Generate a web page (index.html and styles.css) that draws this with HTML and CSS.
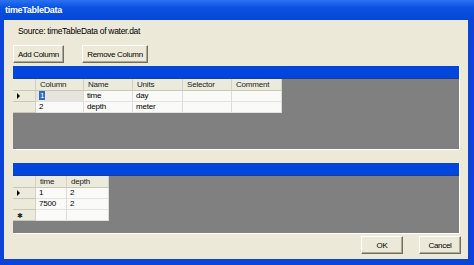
FILE: index.html
```html
<!DOCTYPE html>
<html lang="en">
<head>
    <meta charset="UTF-8">
    <title>timeTableData</title>
    <link rel="stylesheet" href="styles.css">
</head>
<body>
    <div class="window">
        <div class="titlebar">timeTableData</div>
        <div class="client">
            <div class="source">Source: timeTableData of water.dat</div>
            <div class="toolbar">
                <button class="btn add">Add Column</button>
                <button class="btn remove">Remove Column</button>
            </div>

            <div class="grid grid-columns">
                <div class="caption"></div>
                <div class="table cols5">
                    <div class="hcell corner"></div>
                    <div class="hcell">Column</div>
                    <div class="hcell">Name</div>
                    <div class="hcell">Units</div>
                    <div class="hcell">Selector</div>
                    <div class="hcell">Comment</div>

                    <div class="rhead"><span class="arrow"></span></div>
                    <div class="cell current"><span class="sel">1</span></div>
                    <div class="cell">time</div>
                    <div class="cell">day</div>
                    <div class="cell"></div>
                    <div class="cell"></div>

                    <div class="rhead"></div>
                    <div class="cell">2</div>
                    <div class="cell">depth</div>
                    <div class="cell">meter</div>
                    <div class="cell"></div>
                    <div class="cell"></div>
                </div>
            </div>

            <div class="grid grid-data">
                <div class="caption"></div>
                <div class="table cols2">
                    <div class="hcell corner"></div>
                    <div class="hcell">time</div>
                    <div class="hcell">depth</div>

                    <div class="rhead"><span class="arrow"></span></div>
                    <div class="cell">1</div>
                    <div class="cell">2</div>

                    <div class="rhead"></div>
                    <div class="cell">7500</div>
                    <div class="cell">2</div>

                    <div class="rhead"><span class="star">&#10033;</span></div>
                    <div class="cell"></div>
                    <div class="cell"></div>
                </div>
            </div>

            <div class="footer">
                <button class="btn ok">OK</button>
                <button class="btn cancel">Cancel</button>
            </div>
        </div>
    </div>
</body>
</html>
```

FILE: styles.css
```css
body {
    margin: 0;
    font-family: 'Liberation Sans', Arial, sans-serif;
    font-size: 8px;
    letter-spacing: -0.2px;
    color: #000;
    overflow: hidden;
}

.window {
    width: 474px;
    height: 265px;
    background: #0a44d8;
    display: flex;
    flex-direction: column;
    box-sizing: border-box;
}

.titlebar {
    height: 20px;
    line-height: 20px;
    padding-left: 5px;
    color: #fff;
    font-weight: bold;
    font-size: 9px;
    letter-spacing: -0.3px;
    background: linear-gradient(#2a72f0, #0a50e2 40%, #0646d6);
}

.client {
    flex: 1;
    margin: 0 6px 6px 4px;
    background: #ece9d8;
    padding: 4px 7px 0 9px;
    display: flex;
    flex-direction: column;
}

.source {
    height: 13px;
    line-height: 13px;
    padding-left: 5px;
    margin-top: 1px;
    font-size: 8.5px;
    letter-spacing: -0.3px;
}

.toolbar {
    display: flex;
    gap: 18px;
    margin-top: 7px;
}

.btn {
    font-family: 'Liberation Sans', Arial, sans-serif;
    font-size: 8px;
    letter-spacing: -0.3px;
    height: 18px;
    padding: 0;
    background: #ece9d8;
    border: 1px solid;
    border-color: #fff #716f64 #716f64 #fff;
    box-shadow: inset -1px -1px 0 #aca899;
    color: #000;
}

.add { width: 51px; }
.remove { width: 66px; }

.grid {
    width: 447px;
    background: #808080;
    border-right: 1px solid #fff;
    border-bottom: 1px solid #fff;
    box-sizing: border-box;
}

.grid-columns {
    height: 84px;
    margin-top: 3px;
}

.grid-data {
    height: 71px;
    margin-top: 13px;
}

.caption {
    height: 12px;
    background: #0046dc;
    border-bottom: 1px solid #1c3c8c;
}

.table {
    display: grid;
    grid-auto-rows: 11px;
    background: #fafaf8;
}

.cols5 {
    width: 269px;
    grid-template-columns: 23px 48px 49px 50px 49px 50px;
    grid-template-rows: 12px;
}

.cols2 {
    width: 96px;
    grid-template-columns: 23px 31px 42px;
    grid-template-rows: 12px;
}

.hcell, .rhead {
    background: #ebeadb;
    border-right: 1px solid #d4d0c8;
    border-bottom: 1px solid #cbc7b8;
    line-height: 11px;
    color: #222;
    overflow: hidden;
}

.hcell {
    padding-left: 4px;
}

.rhead {
    display: flex;
    align-items: center;
    padding-left: 4px;
}

.cell {
    border-right: 1px solid #dcdcdc;
    border-bottom: 1px solid #e2e2e2;
    line-height: 10px;
    padding-left: 3px;
    overflow: hidden;
    white-space: nowrap;
}

.current {
    background: #e6e4dc;
}

.sel {
    background: #316ac5;
    color: #fff;
    padding: 0 1px;
}

.arrow {
    width: 0;
    height: 0;
    border-top: 3px solid transparent;
    border-bottom: 3px solid transparent;
    border-left: 3px solid #000;
}

.star {
    font-size: 7px;
    line-height: 7px;
}

.footer {
    display: flex;
    justify-content: flex-end;
    gap: 16px;
    margin-top: 2px;
}

.ok, .cancel {
    width: 42px;
}
```
